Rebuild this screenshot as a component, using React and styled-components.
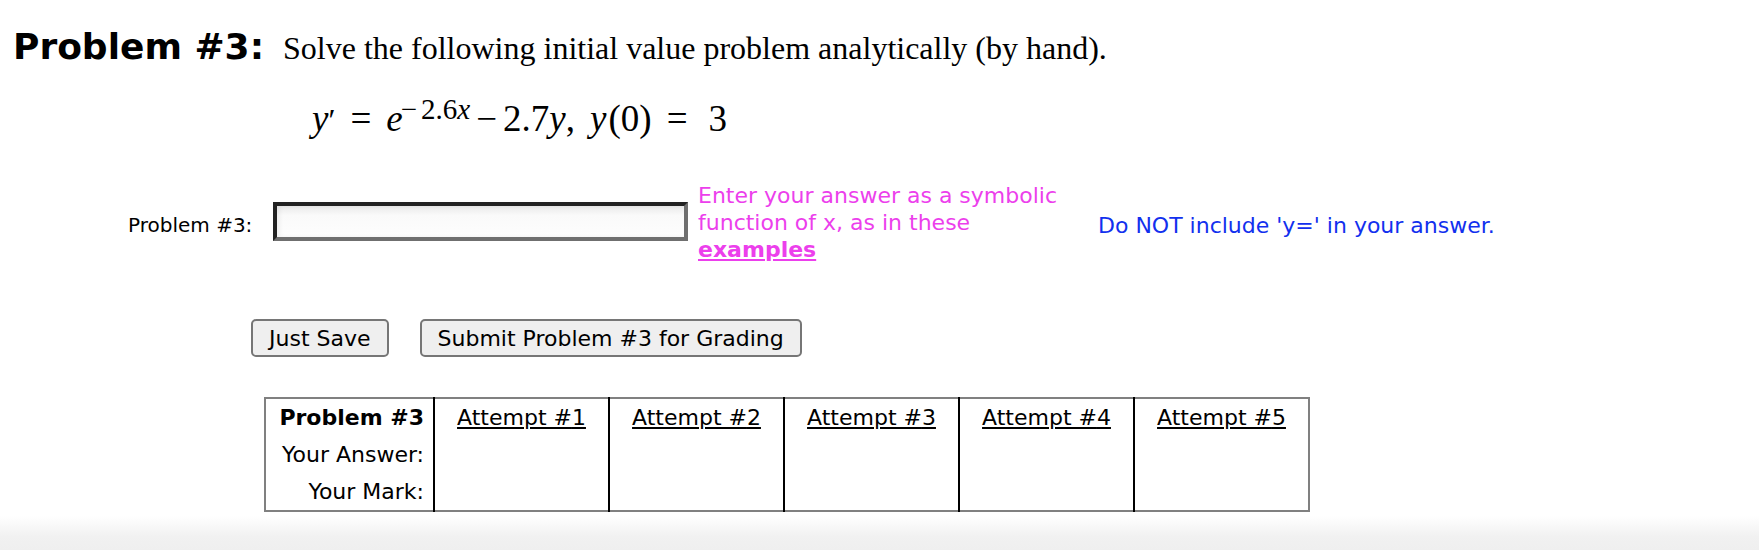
import React from 'react'
import styled, { createGlobalStyle } from "styled-components";

const GlobalStyle = createGlobalStyle`
html, body {
    margin: 0;
    padding: 0;
    background: #ffffff;
}
body {
    font-family: "DejaVu Sans", Verdana, sans-serif;
    color: #000;
}
`;

const attempts = [1, 2, 3, 4, 5];

const App = () => {
    return (
        <>
        <GlobalStyle />
        <Page>
            <Heading>
                <HeadingLabel>Problem #3:</HeadingLabel>
                <HeadingText>Solve the following initial value problem analytically (by hand).</HeadingText>
            </Heading>

            <Equation>
                <Var>y</Var><Prime>′</Prime>
                <Op>=</Op>
                <Var>e</Var>
                <Sup><SupSign>−</SupSign>2.6<i>x</i></Sup>
                <Op small>−</Op>
                2.7<Var>y</Var>,
                <Var spaced>y</Var>(0)
                <Op>=</Op>
                <Num>3</Num>
            </Equation>

            <AnswerRow>
                <FieldLabel>Problem #3:</FieldLabel>
                <AnswerInput type="text" />
                <Hint>
                    Enter your answer as a symbolic<br />
                    function of x, as in these<br />
                    <HintLink href="#">examples</HintLink>
                </Hint>
                <Warning>Do NOT include 'y=' in your answer.</Warning>
            </AnswerRow>

            <Buttons>
                <Button>Just Save</Button>
                <Button>Submit Problem #3 for Grading</Button>
            </Buttons>

            <Attempts>
                <tbody>
                    <tr>
                        <HeadCell>Problem #3</HeadCell>
                        {attempts.map(n => (
                            <Cell key={n}><AttemptLink href="#">Attempt #{n}</AttemptLink></Cell>
                        ))}
                    </tr>
                    <tr>
                        <RowLabel>Your Answer:</RowLabel>
                        {attempts.map(n => <Cell key={n} />)}
                    </tr>
                    <tr>
                        <RowLabel>Your Mark:</RowLabel>
                        {attempts.map(n => <Cell key={n} />)}
                    </tr>
                </tbody>
            </Attempts>
        </Page>
        <Fade />
        </>
    )
}

const Page = styled.div`
padding: 26px 0 0 13px;
height: 516px;
box-sizing: border-box;
`;

const Heading = styled.div`
display: flex;
align-items: baseline;
gap: 19px;
`;
const HeadingLabel = styled.span`
font-family: "DejaVu Sans", Verdana, sans-serif;
font-weight: 700;
font-size: 36px;
`;
const HeadingText = styled.span`
font-family: "Liberation Serif", "Times New Roman", serif;
font-size: 32px;
`;

const Equation = styled.div`
margin: 29px 0 0 299px;
font-family: "Liberation Serif", "Times New Roman", serif;
font-size: 37px;
line-height: 46px;
display: flex;
align-items: baseline;
white-space: pre;
`;
const Var = styled.i`
font-style: italic;
margin-left: ${p => p.spaced ? '15px' : '0'};
margin-right: ${p => p.spaced ? '2px' : '0'};
`;
const Num = styled.span`
margin-left: 6px;
`;
const Prime = styled.span`
font-size: 32px;
`;
const Op = styled.span`
padding: 0 ${p => p.small ? '6px' : '15px'};
`;
const Sup = styled.span`
font-size: 29px;
position: relative;
top: -12px;
margin-left: -2px;
`;
const SupSign = styled.span`
margin-right: 4px;
`;

const AnswerRow = styled.div`
margin-top: 35px;
padding-left: 115px;
display: flex;
align-items: center;
`;
const FieldLabel = styled.span`
font-size: 20px;
width: 145px;
padding-top: 8px;
`;
const AnswerInput = styled.input`
box-sizing: border-box;
width: 415px;
height: 39px;
border-style: solid;
border-width: 4px;
border-color: #222 #6f6f6f #6f6f6f #222;
background: linear-gradient(#e9e9e9, #fafafa 30%, #fdfdfd);
box-shadow: inset 3px 0 4px rgba(0,0,0,0.05);
outline: none;
margin: 0;
`;
const Hint = styled.div`
margin-left: 10px;
width: 400px;
font-size: 22px;
line-height: 27px;
color: #ec3fec;
padding-top: 3px;
`;
const HintLink = styled.a`
color: #ec3fec;
font-weight: 700;
text-decoration: underline;
`;
const Warning = styled.div`
font-size: 22px;
color: #1230ee;
padding-top: 9px;
`;

const Buttons = styled.div`
margin-top: 56px;
padding-left: 238px;
display: flex;
gap: 31px;
`;
const Button = styled.button`
height: 38px;
padding: 0 16px;
font-family: "DejaVu Sans", Verdana, sans-serif;
font-size: 22px;
color: #000;
background: #efefef;
border: 2px solid #767676;
border-radius: 5px;
`;

const Attempts = styled.table`
margin: 40px 0 0 251px;
border-collapse: collapse;
border: 2px solid #808080;
font-size: 22px;
`;
const Cell = styled.td`
width: 173px;
height: 37px;
padding: 0;
text-align: center;
vertical-align: middle;
border-left: 2px solid #000;
`;
const HeadCell = styled.th`
width: 158px;
height: 37px;
padding: 0 9px 0 0;
text-align: right;
font-weight: 700;
`;
const RowLabel = styled.td`
height: 37px;
padding: 0 9px 0 0;
text-align: right;
`;
const AttemptLink = styled.a`
color: #000;
text-decoration: underline;
`;

const Fade = styled.div`
height: 34px;
background: linear-gradient(#ffffff, #f1f1f1 60%, #efefef);
`;

export default App;
